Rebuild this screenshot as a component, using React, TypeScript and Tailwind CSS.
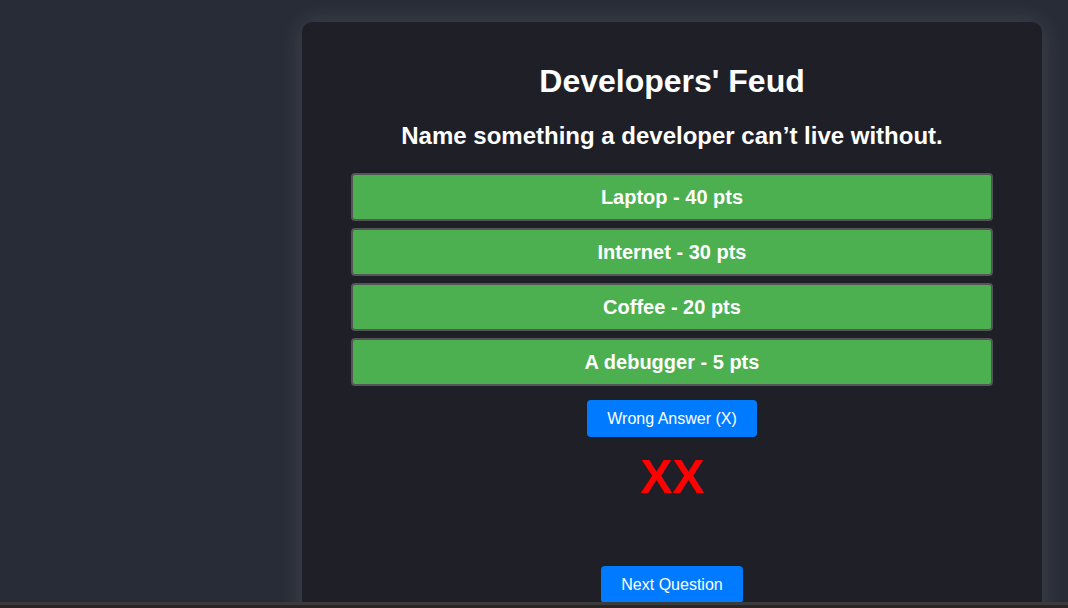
import React from "react";

const answers = [
  "Laptop - 40 pts",
  "Internet - 30 pts",
  "Coffee - 20 pts",
  "A debugger - 5 pts",
];

export default function App() {
  return (
    <div className="flex h-[608px] w-[1068px] flex-col overflow-hidden bg-[#282c36] font-['Liberation_Sans',Arial,sans-serif] text-white">
      <div className="flex-1 overflow-hidden pl-[302px] pt-[22px]">
        <div className="flex h-[700px] w-[740px] flex-col items-center rounded-[10px] bg-[#1e1f27] shadow-[0_0_24px_rgba(255,255,255,0.13)]">
          <h1 className="mt-[41px] text-[32px] font-bold leading-[37px]">Developers' Feud</h1>
          <h2 className="mt-[22px] text-[24px] font-bold leading-[28px]">
            Name something a developer can’t live without.
          </h2>
          <div className="mt-[23px] flex w-[642px] flex-col gap-[7px]">
            {answers.map((a) => (
              <div
                key={a}
                className="flex h-[48px] items-center justify-center rounded-[4px] border-2 border-[#555558] bg-[#4caf50] text-[20px] font-bold"
              >
                {a}
              </div>
            ))}
          </div>
          <button className="mt-[14px] h-[37px] rounded-[4px] bg-[#007bff] px-[20px] text-[16px] leading-[18px] text-white">
            Wrong Answer (X)
          </button>
          <div className="mt-[12px] text-[48px] font-bold leading-[55px] text-[#ff0000]">XX</div>
          <button className="mt-[62px] h-[37px] rounded-[4px] bg-[#007bff] px-[20px] text-[16px] leading-[18px] text-white">
            Next Question
          </button>
        </div>
      </div>
      <div className="h-[6px] shrink-0 border-t-[3px] border-[#3b3b3b] bg-[#2a2424]" />
    </div>
  );
}
